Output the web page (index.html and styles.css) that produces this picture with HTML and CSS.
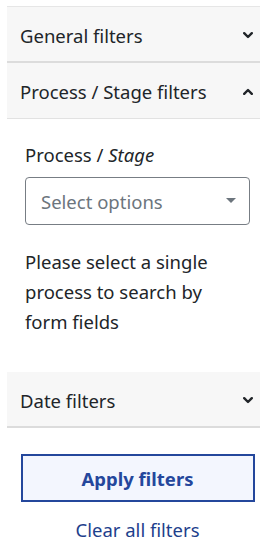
FILE: index.html
```html
<!DOCTYPE html>
<html lang="en">
<head>
    <meta charset="UTF-8">
    <title>Filters</title>
    <link rel="stylesheet" href="styles.css">
</head>
<body>

<div class="filtros">
    <div class="panel">
        <div class="panel-header cerrado">
            <span>General filters</span>
            <svg class="chevron" width="10" height="7" viewBox="0 0 10 7"><polyline points="1.2,1.2 5,5 8.8,1.2" /></svg>
        </div>
    </div>

    <div class="panel">
        <div class="panel-header abierto">
            <span>Process / Stage filters</span>
            <svg class="chevron" width="10" height="7" viewBox="0 0 10 7"><polyline points="1.2,5.8 5,2 8.8,5.8" /></svg>
        </div>
        <div class="panel-body">
            <label class="etiqueta">Process / <em>Stage</em></label>
            <div class="selector">
                <span>Select options</span>
                <svg width="10" height="6" viewBox="0 0 10 6"><polygon points="0,0 10,0 5,5" /></svg>
            </div>
            <p class="ayuda">Please select a single process to search by form fields</p>
        </div>
    </div>

    <div class="panel">
        <div class="panel-header cerrado">
            <span>Date filters</span>
            <svg class="chevron" width="10" height="7" viewBox="0 0 10 7"><polyline points="1.2,1.2 5,5 8.8,1.2" /></svg>
        </div>
    </div>

    <div class="botonera">
        <button class="aplicar">Apply filters</button>
        <a href="#" class="limpiar">Clear all filters</a>
    </div>
</div>

</body>
</html>
```

FILE: styles.css
```css
html {
    overflow: hidden;
}
body {
    margin: 0;
    font-family: 'Noto Sans', 'Open Sans', sans-serif;
    font-size: 18.5px;
    color: #212529;
    background: #fff;
}
.filtros {
    margin: 6px 0 0 7px;
    width: 261px;
    border-top: 1px solid #e6e6e6;
}
.panel-header {
    display: flex;
    align-items: center;
    justify-content: space-between;
    height: 52px;
    padding: 2px 15px 0 13px;
    background: #f7f7f7;
}
.panel-header.cerrado {
    border-bottom: 2px solid #dcdcdc;
}
.panel-header.abierto {
    height: 53px;
    border-bottom: 1px solid #e2e2e2;
}
.chevron {
    fill: none;
    stroke: #212529;
    stroke-width: 2.4;
    stroke-linecap: round;
    stroke-linejoin: round;
}
.panel-body {
    padding: 22px 18px 24px;
    height: 207px;
}
.etiqueta {
    display: block;
    line-height: 28px;
}
.selector {
    margin-top: 8px;
    height: 46px;
    border: 1px solid #777d84;
    border-radius: 4px;
    display: flex;
    align-items: center;
    justify-content: space-between;
    padding: 0 13px 0 15px;
    color: #6c757d;
}
.selector svg {
    fill: #6c757d;
}
.ayuda {
    margin: 22px 0 0;
    max-width: 200px;
    line-height: 30px;
}
.botonera {
    padding-top: 26px;
    text-align: center;
}
.aplicar {
    display: block;
    width: 234px;
    height: 48px;
    margin: 0 auto;
    background: #f3f6fe;
    border: 2px solid #24479c;
    color: #24479c;
    font-family: inherit;
    font-size: 18.5px;
    font-weight: bold;
    cursor: pointer;
}
.limpiar {
    display: inline-block;
    margin-top: 15px;
    color: #1e3f8c;
    text-decoration: none;
}
```
